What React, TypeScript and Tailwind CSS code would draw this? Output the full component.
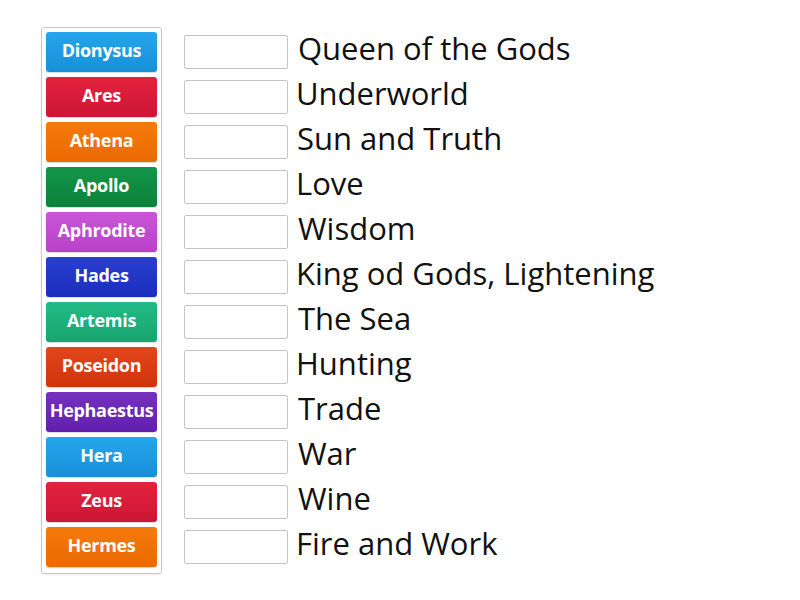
const gods = [
  { name: 'Dionysus', bg: 'bg-gradient-to-b from-[#25a6ec] to-[#1690d8]' },
  { name: 'Ares', bg: 'bg-gradient-to-b from-[#e2223f] to-[#cc1634]' },
  { name: 'Athena', bg: 'bg-gradient-to-b from-[#f67a0a] to-[#ea6a00]' },
  { name: 'Apollo', bg: 'bg-gradient-to-b from-[#13954a] to-[#0c8239]' },
  { name: 'Aphrodite', bg: 'bg-gradient-to-b from-[#c955d6] to-[#b941c9]' },
  { name: 'Hades', bg: 'bg-gradient-to-b from-[#2a3fd0] to-[#1b2dbd]' },
  { name: 'Artemis', bg: 'bg-gradient-to-b from-[#22bb85] to-[#17a56f]' },
  { name: 'Poseidon', bg: 'bg-gradient-to-b from-[#e2461a] to-[#d0330a]' },
  { name: 'Hephaestus', bg: 'bg-gradient-to-b from-[#7530be] to-[#621fae]' },
  { name: 'Hera', bg: 'bg-gradient-to-b from-[#25a6ec] to-[#1690d8]' },
  { name: 'Zeus', bg: 'bg-gradient-to-b from-[#e2223f] to-[#cc1634]' },
  { name: 'Hermes', bg: 'bg-gradient-to-b from-[#f67a0a] to-[#ea6a00]' },
]

const answers = [
  { text: 'Queen of the Gods', pad: 'pl-[10px]' },
  { text: 'Underworld', pad: 'pl-[8px]' },
  { text: 'Sun and Truth', pad: 'pl-[9px]' },
  { text: 'Love', pad: 'pl-[8px]' },
  { text: 'Wisdom', pad: 'pl-[10px]' },
  { text: 'King od Gods, Lightening', pad: 'pl-[8px]' },
  { text: 'The Sea', pad: 'pl-[10px]' },
  { text: 'Hunting', pad: 'pl-[8px]' },
  { text: 'Trade', pad: 'pl-[10px]' },
  { text: 'War', pad: 'pl-[10px]' },
  { text: 'Wine', pad: 'pl-[10px]' },
  { text: 'Fire and Work', pad: 'pl-[8px]' },
]

export default function App() {
  return (
    <div className="w-[800px] h-[600px] bg-white font-['Open_Sans',sans-serif]">
      <div className="flex pt-[27px] pl-[41px]">
        {/* tiles */}
        <div className="w-[121px] h-[547px] border border-[#c8c8c8] rounded-[3px] p-[4px] flex flex-col gap-[5px] shadow-[0_1px_2px_rgba(0,0,0,0.08)]">
          {gods.map((g) => (
            <div
              key={g.name}
              className={`h-[40px] pb-[3px] rounded-[3px] flex items-center justify-center text-white font-bold text-[18px] tracking-[-0.3px] shadow-[0_1px_1px_rgba(0,0,0,0.15)] ${g.bg}`}
            >
              {g.name}
            </div>
          ))}
        </div>

        {/* targets */}
        <div className="ml-[22px] pt-[2px] flex flex-col">
          {answers.map((a) => (
            <div key={a.text} className="h-[45px] flex items-center">
              <div className="w-[104px] h-[34px] border border-[#c4c4c4] rounded-[2px] bg-white" />
              <div className={`${a.pad} text-[31px] leading-none text-[#111] -mt-[6px]`}>{a.text}</div>
            </div>
          ))}
        </div>
      </div>
    </div>
  )
}
